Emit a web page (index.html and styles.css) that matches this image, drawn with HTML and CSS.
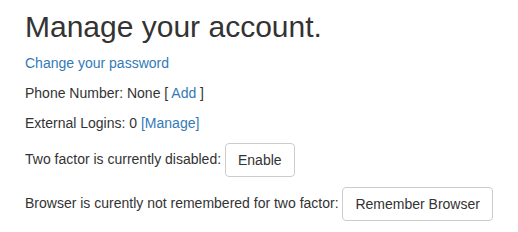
FILE: index.html
```html
<!DOCTYPE html>
<html>
<head>
    <meta charset="utf-8">
    <title>Manage</title>
    <link rel="stylesheet" href="styles.css">
</head>
<body>
    <div class="container">
        <h2>Manage your account.</h2>
        <p><a href="#">Change your password</a></p>
        <p>Phone Number: None [ <a href="#">Add</a> ]</p>
        <p>External Logins: 0 <a href="#">[Manage]</a></p>
        <p>Two factor is currently disabled: <button class="btn">Enable</button></p>
        <p>Browser is curently not remembered for two factor: <button class="btn">Remember Browser</button></p>
    </div>
</body>
</html>
```

FILE: styles.css
```css
body {
    margin: 0;
    font-family: "Liberation Sans", Arial, sans-serif;
    font-size: 14px;
    line-height: 20px;
    color: #333;
    background: #fff;
}
.container {
    padding: 10px 25px 0 25px;
}
h2 {
    font-size: 30px;
    font-weight: 500;
    line-height: 33px;
    margin: 0 0 10px 0;
}
p {
    margin: 0 0 10px 0;
}
a {
    color: #337ab7;
    text-decoration: none;
}
.btn {
    display: inline-block;
    font-family: inherit;
    font-size: 14px;
    line-height: 20px;
    padding: 6px 12px;
    color: #333;
    background: #fff;
    border: 1px solid #ccc;
    border-radius: 4px;
    vertical-align: middle;
    cursor: pointer;
}
```
